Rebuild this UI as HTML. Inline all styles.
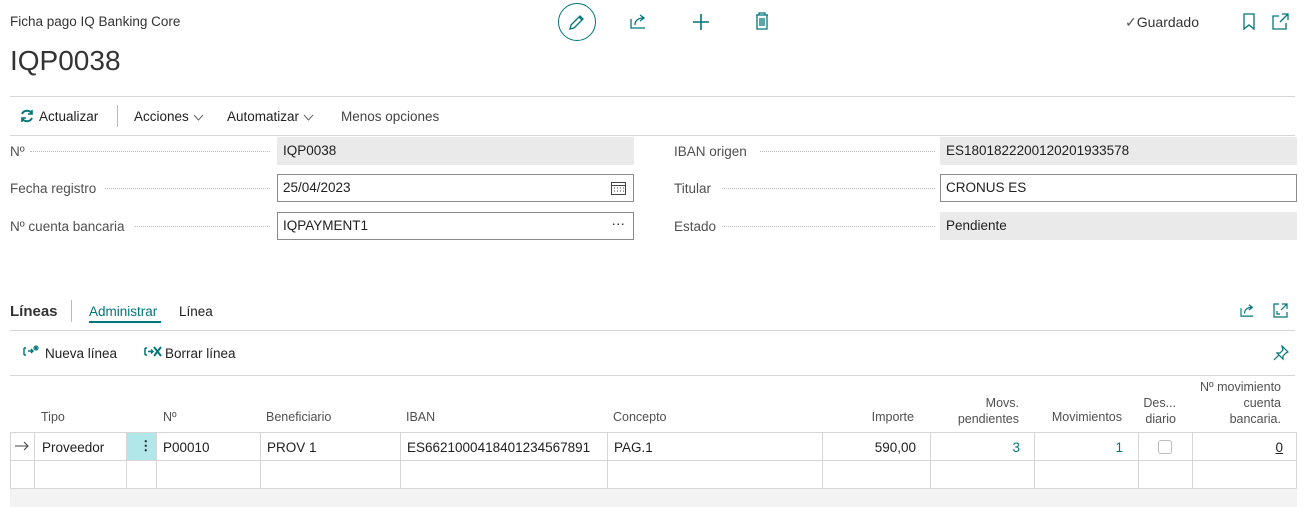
<!DOCTYPE html>
<html><head><meta charset="utf-8"><style>
*{box-sizing:border-box;margin:0;padding:0}
body{width:1305px;height:507px;overflow:hidden;background:#fff;font-family:"Liberation Sans",sans-serif;color:#212121;font-size:13.5px;position:relative}
.a{position:absolute;white-space:nowrap}
.t{color:#00757a}
.lbl{color:#505050}
.dots{position:absolute;border-bottom:1px dotted #bbb;height:0}
.fld{position:absolute;height:28px;padding:6px 6px;font-size:13.5px}
.ro{background:#eaeaea}
.ed{border:1px solid #8a8a8a;background:#fff;padding:5px 5px}
.hl{position:absolute;height:1px;background:#d6d6d6}
.vl{position:absolute;width:1px;background:#d6d6d6}
.th{position:absolute;color:#505050;font-size:12.5px;line-height:16px}
.chev{display:inline-block;vertical-align:middle;margin-left:4px}
</style></head><body>
<div class="a" style="left:10px;top:14px;font-size:13.5px;color:#333">Ficha pago IQ Banking Core</div>
<div class="a" style="left:10px;top:45px;font-size:28px;color:#333">IQP0038</div>
<div class="a" style="left:558px;top:3px;width:38px;height:38px;border:1.5px solid #00757a;border-radius:50%"></div>
<svg class="a" style="left:568px;top:13px" width="18" height="18" viewBox="0 0 18 18" fill="none" stroke="#00757a" stroke-width="1.3"><path d="M2 16l1-4L12 3l3 3-9 9z M11 4l3 3"/></svg>
<svg class="a" style="left:630px;top:13px" width="18" height="16" viewBox="0 0 18 16" fill="none" stroke="#00757a" stroke-width="1.3"><path d="M1 6v9h14 M5 12c0-5 4-7 8-7 M10 2l4 3-4 3"/></svg>
<svg class="a" style="left:692px;top:13px" width="18" height="18" viewBox="0 0 18 18" stroke="#00757a" stroke-width="1.6"><path d="M9 1v16M1 9h16"/></svg>
<svg class="a" style="left:755px;top:12px" width="14" height="18" viewBox="0 0 14 18" fill="none" stroke="#00757a" stroke-width="1.3"><path d="M1 3h12 M4 3V1h6v2 M2 3v14h10V3 M5 6v8M7 6v8M9 6v8"/></svg>
<div class="a" style="left:1125px;top:14px;font-size:14px;color:#333"><span style="color:#555">✓</span>Guardado</div>
<svg class="a" style="left:1243px;top:13px" width="12" height="17" viewBox="0 0 12 17" fill="none" stroke="#00757a" stroke-width="1.3"><path d="M1 1h10v15l-5-4-5 4z"/></svg>
<svg class="a" style="left:1272px;top:13px" width="17" height="17" viewBox="0 0 17 17" fill="none" stroke="#00757a" stroke-width="1.3"><path d="M7 3H1v13h13v-6 M10 1h6v6 M16 1L8 9"/></svg>
<div class="hl" style="left:10px;right:10px;top:96px"></div>
<svg class="a" style="left:20px;top:109px" width="14" height="14" viewBox="0 0 14 14" fill="none" stroke="#00757a" stroke-width="2"><path d="M12 5A5.5 5.5 0 0 0 2 5 M2 9a5.5 5.5 0 0 0 10 0"/><path d="M12 1v4H8 M2 13V9h4" stroke-width="1.6"/></svg>
<div class="a" style="left:39px;top:109px">Actualizar</div>
<div class="vl" style="left:117px;top:105px;height:22px;background:#bbb"></div>
<div class="a" style="left:134px;top:109px">Acciones<svg class="chev" width="11" height="7" viewBox="0 0 11 7" fill="none" stroke="#666"><path d="M1 1l4.5 5L10 1"/></svg></div>
<div class="a" style="left:227px;top:109px">Automatizar<svg class="chev" width="11" height="7" viewBox="0 0 11 7" fill="none" stroke="#666"><path d="M1 1l4.5 5L10 1"/></svg></div>
<div class="a" style="left:341px;top:109px;color:#444">Menos opciones</div>
<div class="hl" style="left:10px;right:10px;top:135px"></div>

<div class="a lbl" style="left:10px;top:144px">Nº</div><div class="dots" style="left:30px;width:240px;top:151px"></div>
<div class="fld ro" style="left:277px;top:137px;width:357px">IQP0038</div>
<div class="a lbl" style="left:10px;top:181px">Fecha registro</div><div class="dots" style="left:105px;width:165px;top:188px"></div>
<div class="fld ed" style="left:277px;top:174px;width:357px">25/04/2023<svg style="position:absolute;right:7px;top:6px" width="15" height="14" viewBox="0 0 15 14" fill="none" stroke="#444"><rect x="0.5" y="1.5" width="14" height="12"/><path d="M0.5 4.5h14M3 7h1M6 7h1M9 7h1M12 7h1M3 10h1M6 10h1M9 10h1M12 10h1"/></svg></div>
<div class="a lbl" style="left:10px;top:219px">Nº cuenta bancaria</div><div class="dots" style="left:135px;width:135px;top:226px"></div>
<div class="fld ed" style="left:277px;top:212px;width:357px">IQPAYMENT1<span style="position:absolute;right:8px;top:3px">···</span></div>

<div class="a lbl" style="left:674px;top:144px">IBAN origen</div><div class="dots" style="left:760px;width:175px;top:151px"></div>
<div class="fld ro" style="left:940px;top:137px;width:357px">ES1801822200120201933578</div>
<div class="a lbl" style="left:674px;top:181px">Titular</div><div class="dots" style="left:722px;width:213px;top:188px"></div>
<div class="fld ed" style="left:940px;top:174px;width:357px">CRONUS ES</div>
<div class="a lbl" style="left:674px;top:219px">Estado</div><div class="dots" style="left:722px;width:213px;top:226px"></div>
<div class="fld ro" style="left:940px;top:212px;width:357px">Pendiente</div>

<div class="a" style="left:10px;top:303px;font-size:15px;font-weight:bold;color:#333">Líneas</div>
<div class="vl" style="left:71px;top:300px;height:22px;background:#bbb"></div>
<div class="a t" style="left:89px;top:304px;font-size:13.5px">Administrar</div>
<div class="a" style="left:89px;top:321px;width:72px;height:2px;background:#00757a"></div>
<div class="a" style="left:179px;top:304px">Línea</div>
<svg class="a" style="left:1240px;top:303px" width="16" height="14" viewBox="0 0 18 16" fill="none" stroke="#00757a" stroke-width="1.3"><path d="M1 6v9h14 M5 12c0-5 4-7 8-7 M10 2l4 3-4 3"/></svg>
<svg class="a" style="left:1273px;top:303px" width="15" height="15" viewBox="0 0 15 15" fill="none" stroke="#00757a" stroke-width="1.2"><path d="M6 1H1v13h13V9 M9 1h5v5 M14 1L8 7 M4 8v3h3"/></svg>
<div class="hl" style="left:10px;right:10px;top:330px"></div>
<svg class="a" style="left:23px;top:344px" width="18" height="14" viewBox="0 0 18 14" fill="none" stroke="#00757a" stroke-width="1.4"><path d="M1 4h2M1 11h2M5 7h5M8 5l2 2-2 2 M1 4v7"/><path d="M13 1v6M10 4h6M11 2l4 4M15 2l-4 4" stroke-width="1"/></svg>
<div class="a" style="left:45px;top:346px">Nueva línea</div>
<svg class="a" style="left:144px;top:345px" width="18" height="13" viewBox="0 0 18 13" fill="none" stroke="#00757a" stroke-width="1.5"><path d="M1 3h2M1 10h2M1 3v7M4 6.5h5M7 4.5l2 2-2 2"/><path d="M10 2l7 9M17 2l-7 9" stroke-width="2"/></svg>
<div class="a" style="left:165px;top:346px">Borrar línea</div>
<svg class="a" style="left:1273px;top:345px" width="16" height="16" viewBox="0 0 16 16" fill="none" stroke="#00757a" stroke-width="1.2"><path d="M9 1l6 6-2 1-3 3 0 3-6-6 3 0 3-3z M6 10l-5 5"/></svg>
<div class="hl" style="left:10px;right:10px;top:375px"></div>

<div class="th" style="left:41px;top:409px">Tipo</div>
<div class="th" style="left:163px;top:409px">Nº</div>
<div class="th" style="left:266px;top:409px">Beneficiario</div>
<div class="th" style="left:406px;top:409px">IBAN</div>
<div class="th" style="left:613px;top:409px">Concepto</div>
<div class="th" style="left:822px;width:92px;text-align:right;top:409px">Importe</div>
<div class="th" style="left:930px;width:89px;text-align:right;top:395px">Movs.<br>pendientes</div>
<div class="th" style="left:1034px;width:88px;text-align:right;top:409px">Movimientos</div>
<div class="th" style="left:1138px;width:38px;text-align:right;top:395px">Des...<br>diario</div>
<div class="th" style="left:1192px;width:89px;text-align:right;top:379px">Nº movimiento<br>cuenta<br>bancaria.</div>

<div class="hl" style="left:10px;width:1287px;top:432px"></div>
<div class="hl" style="left:10px;width:1287px;top:460px"></div>
<div class="hl" style="left:10px;width:1287px;top:488px"></div>
<div class="a" style="left:10px;top:489px;width:1287px;height:18px;background:#f3f3f4"></div>
<div class="a" style="left:127px;top:433px;width:29px;height:27px;background:#b2e7ea"></div>
<div class="vl" style="left:10px;top:432px;height:56px"></div>
<div class="vl" style="left:34px;top:432px;height:56px"></div>
<div class="vl" style="left:126px;top:432px;height:56px"></div>
<div class="vl" style="left:156px;top:432px;height:56px"></div>
<div class="vl" style="left:260px;top:432px;height:56px"></div>
<div class="vl" style="left:400px;top:432px;height:56px"></div>
<div class="vl" style="left:607px;top:432px;height:56px"></div>
<div class="vl" style="left:822px;top:432px;height:56px"></div>
<div class="vl" style="left:930px;top:432px;height:56px"></div>
<div class="vl" style="left:1034px;top:432px;height:56px"></div>
<div class="vl" style="left:1138px;top:432px;height:56px"></div>
<div class="vl" style="left:1192px;top:432px;height:56px"></div>
<div class="vl" style="left:1296px;top:432px;height:56px"></div>

<svg class="a" style="left:15px;top:441px" width="14" height="10" viewBox="0 0 14 10" fill="none" stroke="#444" stroke-width="1.1"><path d="M0 5h13M9 1l4 4-4 4"/></svg>
<div class="a" style="left:42px;top:440px">Proveedor</div>
<div class="a" style="left:139px;top:438px;font-weight:bold">⋮</div>
<div class="a" style="left:163px;top:440px">P00010</div>
<div class="a" style="left:267px;top:440px">PROV 1</div>
<div class="a" style="left:407px;top:440px">ES6621000418401234567891</div>
<div class="a" style="left:614px;top:440px">PAG.1</div>
<div class="a" style="left:822px;width:94px;text-align:right;top:440px">590,00</div>
<div class="a t" style="left:930px;width:90px;text-align:right;top:440px">3</div>
<div class="a t" style="left:1034px;width:89px;text-align:right;top:440px">1</div>
<div class="a" style="left:1158px;top:440px;width:14px;height:14px;border:1px solid #bbb;border-radius:3px"></div>
<div class="a" style="left:1192px;width:91px;text-align:right;top:440px;text-decoration:underline">0</div>
</body></html>
